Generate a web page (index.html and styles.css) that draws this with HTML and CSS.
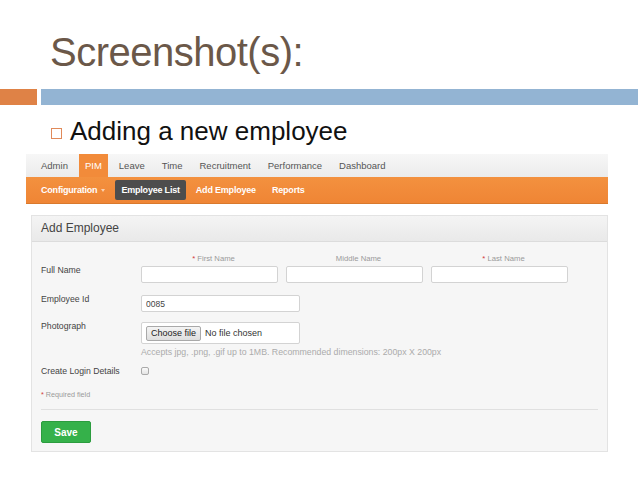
FILE: index.html
```html
<!DOCTYPE html>
<html>
<head>
	<title>Screenshot(s)</title>
	<link rel="stylesheet" href="styles.css">
</head>
<body>
	<div class="slide">
		<h1 class="slide-title">Screenshot(s):</h1>
		<div class="divider">
			<div class="divider-accent"></div>
			<div class="divider-line"></div>
		</div>
		<div class="bullet">
			<span class="bullet-mark"></span>
			<span>Adding a new employee</span>
		</div>

		<div class="app">
			<div class="topnav">
				<span class="topnav-item">Admin</span>
				<span class="topnav-item active">PIM</span>
				<span class="topnav-item">Leave</span>
				<span class="topnav-item">Time</span>
				<span class="topnav-item">Recruitment</span>
				<span class="topnav-item">Performance</span>
				<span class="topnav-item">Dashboard</span>
			</div>
			<div class="subnav">
				<span class="subnav-item">Configuration<span class="caret"></span></span>
				<span class="subnav-item active">Employee List</span>
				<span class="subnav-item">Add Employee</span>
				<span class="subnav-item">Reports</span>
			</div>

			<div class="panel">
				<div class="panel-head">Add Employee</div>
				<div class="panel-body">
					<div class="captions">
						<span class="caption"><em>*</em> First Name</span>
						<span class="caption">Middle Name</span>
						<span class="caption"><em>*</em> Last Name</span>
					</div>
					<div class="row row-name">
						<label class="row-label">Full Name</label>
						<input class="field field-name" type="text">
						<input class="field field-name" type="text">
						<input class="field field-name" type="text">
					</div>
					<div class="row row-id">
						<label class="row-label">Employee Id</label>
						<input class="field field-wide" type="text" value="0085">
					</div>
					<div class="row row-photo">
						<label class="row-label">Photograph</label>
						<div class="filebox">
							<button class="file-btn" type="button">Choose file</button>
							<span class="file-name">No file chosen</span>
						</div>
					</div>
					<div class="hint">Accepts jpg, .png, .gif up to 1MB. Recommended dimensions: 200px X 200px</div>
					<div class="row row-login">
						<label class="row-label">Create Login Details</label>
						<input class="check" type="checkbox">
					</div>
					<div class="required"><em>*</em> Required field</div>
					<div class="form-actions">
						<button class="save-btn" type="button">Save</button>
					</div>
				</div>
			</div>
		</div>
	</div>
</body>
</html>
```

FILE: styles.css
```css
body {
	margin: 0;
	background: #fff;
	font-family: "Liberation Sans", Arial, sans-serif;
}
.slide {
	width: 638px;
	height: 478px;
	overflow: hidden;
}
.slide-title {
	margin: 0;
	padding: 29px 0 0 50px;
	height: 46px;
	font-size: 40px;
	line-height: 46px;
	font-weight: normal;
	letter-spacing: -0.5px;
	color: #6b5849;
}
.divider {
	display: flex;
	gap: 4px;
	height: 16px;
	margin-top: 14px;
}
.divider-accent {
	width: 37px;
	background: #df8246;
}
.divider-line {
	flex: 1;
	background: #93b4d3;
}
.bullet {
	display: flex;
	align-items: center;
	gap: 8px;
	height: 30px;
	margin-top: 11px;
	padding-left: 51px;
	font-size: 26px;
	line-height: 30px;
	color: #111;
}
.bullet-mark {
	width: 11px;
	height: 11px;
	margin-top: 5px;
	box-sizing: border-box;
	border: 1.5px solid #e08a5a;
}

/* app */
.app {
	width: 582px;
	margin: 8px 0 0 26px;
}
.topnav {
	display: flex;
	gap: 5px;
	height: 23px;
	padding-left: 9px;
	background: linear-gradient(#f7f7f7, #ebebeb);
}
.topnav-item {
	padding: 0 6px;
	font-size: 9.5px;
	line-height: 23px;
	color: #555;
}
.topnav-item.active {
	background: #f28b3a;
	color: #fff;
}
.subnav {
	display: flex;
	align-items: center;
	gap: 3px;
	height: 27px;
	box-sizing: border-box;
	padding-left: 8.5px;
	background: linear-gradient(#f3913f, #ef8535);
	border-bottom: 1px solid #d9792c;
}
.subnav-item {
	display: flex;
	align-items: center;
	padding: 0 6.5px;
	height: 20px;
	font-size: 9px;
	font-weight: bold;
	letter-spacing: -0.2px;
	color: #fff;
}
.subnav-item.active {
	background: #4d4d4d;
	border-radius: 2px;
}
.caret {
	margin-left: 4px;
	border-top: 3px solid rgba(255, 255, 255, 0.6);
	border-left: 2.5px solid transparent;
	border-right: 2.5px solid transparent;
}

.panel {
	width: 577px;
	margin: 11px 0 0 5px;
	box-sizing: border-box;
	border: 1px solid #e3e3e3;
	background: #f6f6f6;
}
.panel-head {
	height: 25px;
	padding-left: 9px;
	font-size: 12px;
	line-height: 25px;
	color: #444;
	background: linear-gradient(#f4f4f4, #e9e9e9);
	border-bottom: 1px solid #dcdcdc;
}
.panel-body {
	padding: 0 9px 8px 9px;
}
.captions {
	display: flex;
	gap: 8px;
	margin-top: 13px;
	padding-left: 100px;
	height: 8px;
}
.caption {
	width: 137px;
	box-sizing: border-box;
	padding-left: 8px;
	text-align: center;
	font-size: 7.7px;
	line-height: 8px;
	color: #9a9a9a;
}
em {
	font-style: normal;
	color: #d23a3a;
}
.row {
	display: flex;
	align-items: flex-start;
	gap: 8px;
}
.row-label {
	width: 92px;
	margin-top: -1px;
	font-size: 8.7px;
	line-height: 11px;
	color: #444;
}
.row-name {
	margin-top: 3px;
}
.row-id {
	margin-top: 12px;
}
.row-photo {
	margin-top: 10px;
}
.field {
	height: 17px;
	margin: 0;
	padding: 0 4px;
	box-sizing: border-box;
	border: 1px solid #d3d3d3;
	border-radius: 2px;
	background: #fff;
	font-family: inherit;
	font-size: 8.5px;
	color: #444;
	outline: none;
}
.field-name {
	width: 137px;
}
.field-wide {
	width: 159px;
}
.filebox {
	display: flex;
	align-items: center;
	gap: 4px;
	width: 159px;
	height: 22px;
	padding-left: 4px;
	box-sizing: border-box;
	border: 1px solid #d3d3d3;
	border-radius: 2px;
	background: #fff;
}
.file-btn {
	height: 15px;
	padding: 0 4px;
	border: 1px solid #a9a9a9;
	border-radius: 2px;
	background: linear-gradient(#f4f4f4, #dedede);
	font-family: inherit;
	font-size: 9px;
	color: #222;
}
.file-name {
	font-size: 9px;
	color: #333;
}
.hint {
	margin: 3px 0 0 100px;
	font-size: 8.75px;
	line-height: 10px;
	color: #ababab;
}
.row-login {
	align-items: center;
	height: 11px;
	margin-top: 8.5px;
}
.row-login .row-label {
	margin-top: 0;
}
.check {
	-webkit-appearance: none;
	appearance: none;
	width: 8px;
	height: 8px;
	margin: 0;
	box-sizing: border-box;
	border: 1px solid #aaa;
	border-radius: 2px;
	background: linear-gradient(#fafafa, #e4e4e4);
}
.required {
	margin-top: 13.5px;
	font-size: 7.2px;
	line-height: 10px;
	color: #9a9a9a;
}
.form-actions {
	margin-top: 9px;
	padding-top: 11px;
	border-top: 1px solid #e0e0e0;
}
.save-btn {
	width: 50px;
	height: 22px;
	border: 1px solid #2b9c3e;
	border-radius: 2px;
	background: #35b14a;
	font-family: inherit;
	font-size: 10px;
	font-weight: bold;
	color: #fff;
}
```
